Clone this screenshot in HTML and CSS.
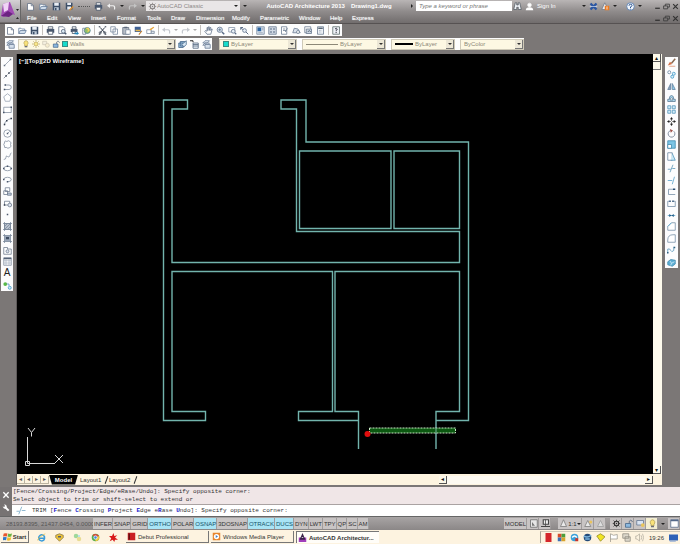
FILE: index.html
```
<!DOCTYPE html>
<html lang="en">

<head>
  <meta charset="UTF-8">
  <meta name="viewport" content="width=device-width, initial-scale=1.0">
  <title>AutoCAD Architecture 2013 - Drawing1.dwg</title>
  <link rel="stylesheet" href="styles.css">
</head>

<body>
  <!-- icon sheet -->
  <svg class="sheet" aria-hidden="true">
    <symbol id="new" viewBox="0 0 12 12"><path d="M2 2h5l3 3v6H2z" fill="#fff" stroke="#5d6b80"/><path d="M7 2v3h3" fill="none" stroke="#5d6b80"/></symbol>
    <symbol id="open" viewBox="0 0 12 12"><path d="M1 10V3h3l1 1h4v2" fill="#fff" stroke="#5d7695"/><path d="M1 10l2-4h8l-2 4z" fill="#cfdcea" stroke="#5d7695"/></symbol>
    <symbol id="save" viewBox="0 0 12 12"><path d="M1 1h10v10H1z" fill="#3d4f68"/><path d="M3 1h6v4H3z" fill="#e9eef5"/><path d="M3 7h6v4H3z" fill="#bfcbd9"/><path d="M4 8h2v3H4z" fill="#3d4f68"/></symbol>
    <symbol id="saveas" viewBox="0 0 12 12"><path d="M1 1h9v9H1z" fill="#3d4f68"/><path d="M3 1h5v3H3zM3 6h5v4H3z" fill="#e9eef5"/><path d="M6 11l5-5" stroke="#d88d2e" stroke-width="2"/></symbol>
    <symbol id="print" viewBox="0 0 12 12"><path d="M3 1h6v3H3z" fill="#fff" stroke="#3e4b5f"/><path d="M1 4h10v5H1z" fill="#4a5970"/><path d="M3 7h6v4H3z" fill="#fff" stroke="#3e4b5f"/></symbol>
    <symbol id="preview" viewBox="0 0 12 12"><path d="M1 1h6l2 2v7H1z" fill="#fff" stroke="#5d6b80"/><circle cx="7" cy="7" r="2.5" fill="#dceaf5" stroke="#4b5a70"/><path d="M9 9l2 2" stroke="#4b5a70" stroke-width="2"/></symbol>
    <symbol id="publish" viewBox="0 0 12 12"><path d="M3 1h5v3H3z" fill="#fff" stroke="#3e4b5f"/><path d="M1 4h9v4H1z" fill="#4a5970"/><path d="M3 7h4v3H3z" fill="#fff" stroke="#3e4b5f"/><path d="M6 9h3V7l3 3-3 2v-1H6z" fill="#2586b9"/></symbol>
    <symbol id="globe" viewBox="0 0 12 12"><path d="M1 3h4v8H1z" fill="#fff" stroke="#66788f"/><circle cx="7" cy="6" r="4" fill="#8fbf6a" stroke="#4d7a96"/><path d="M5 3l3 2-1 3 3-1V4L8 2z" fill="#f2d15c"/></symbol>
    <symbol id="cut" viewBox="0 0 12 12"><path d="M3 2l6 7M9 2L3 9M1 1h2M9 1h2M1 11h2M9 11h2" stroke="#333c4a" stroke-width="1.3"/><circle cx="3" cy="9" r="1.4" fill="none" stroke="#333c4a"/><circle cx="9" cy="9" r="1.4" fill="none" stroke="#333c4a"/></symbol>
    <symbol id="copy" viewBox="0 0 12 12"><path d="M1 1h6v7H1zM4 4h6v7H4z" fill="#fff" stroke="#74849a"/></symbol>
    <symbol id="paste" viewBox="0 0 12 12"><path d="M1 2h8v9H1z" fill="#b7bdc6" stroke="#5b677a"/><path d="M3 1h4v2H3z" fill="#5b677a"/><path d="M5 5h6v6H5z" fill="#fff" stroke="#74849a"/></symbol>
    <symbol id="match" viewBox="0 0 12 12"><path d="M1 1h8v7H1z" fill="#3d5f95"/><path d="M2 5h6v2H2z" fill="#e6b54a"/><path d="M6 11l4-5 1 1-4 5z" fill="#c07a2d"/></symbol>
    <symbol id="block" viewBox="0 0 12 12"><path d="M1 5h6v5H1z" fill="#fff" stroke="#7a879a"/><path d="M7 7h4v3H7z" fill="#dfe5ed" stroke="#7a879a"/><path d="M5 4l5-3 1 1-5 4z" fill="#e5a43a"/></symbol>
    <symbol id="undo" viewBox="0 0 12 12"><path d="M2 5h6q3 0 2 5" fill="none" stroke="currentColor" stroke-width="1.6"/><path d="M0 5l4-3v6z" fill="currentColor"/></symbol>
    <symbol id="redo" viewBox="0 0 12 12"><path d="M10 5H4q-3 0-2 5" fill="none" stroke="currentColor" stroke-width="1.6"/><path d="M12 5L8 2v6z" fill="currentColor"/></symbol>
    <symbol id="hand" viewBox="0 0 12 12"><path d="M4 11L1 7l1-1 2 1V2h1v4l1-5h1v5l1-4h1v4l1-2h1L9 11z" fill="#fff" stroke="#62718a"/></symbol>
    <symbol id="zoomin" viewBox="0 0 12 12"><circle cx="5" cy="5" r="3.5" fill="#dfeaf5" stroke="#596b86"/><path d="M8 8l3 3" stroke="#596b86" stroke-width="2"/><path d="M3 5h4M5 3v4" stroke="#596b86"/></symbol>
    <symbol id="zoomwin" viewBox="0 0 12 12"><path d="M1 2h8v6H1z" fill="none" stroke="#8391a5"/><circle cx="7" cy="7" r="2.5" fill="#e8f0f8" stroke="#596b86"/><path d="M9 9l2 2" stroke="#596b86" stroke-width="1.5"/></symbol>
    <symbol id="zoomprev" viewBox="0 0 12 12"><circle cx="6" cy="6" r="2.5" fill="#e8f0f8" stroke="#596b86"/><path d="M8 8l3 3M1 5V2h3M1 2l3 3" fill="none" stroke="#596b86" stroke-width="1.3"/></symbol>
    <symbol id="props" viewBox="0 0 12 12"><path d="M1 1h10v10H1z" fill="#dfe7f1" stroke="#73849b"/><path d="M2 2h5v5H2z" fill="#2b64a1"/><path d="M8 3h2M8 5h2M3 9h6" stroke="#8b98aa"/></symbol>
    <symbol id="dcenter" viewBox="0 0 12 12"><path d="M1 1h10v10H1z" fill="#d3dbe6" stroke="#66778e"/><path d="M3 3h2v2H3zM7 3h2v2H7zM3 7h2v2H3zM7 7h2v2H7z" fill="#66778e"/></symbol>
    <symbol id="palette" viewBox="0 0 12 12"><path d="M2 1h7v10H2z" fill="#fff" stroke="#66778e"/><path d="M4 4h3M4 6h4M7 8l3-5" stroke="#66778e"/></symbol>
    <symbol id="sheetset" viewBox="0 0 12 12"><path d="M1 9l2-6 5 1 3 5z" fill="#dae2ec" stroke="#66778e"/><circle cx="8" cy="8" r="2" fill="#fff" stroke="#66778e"/></symbol>
    <symbol id="markup" viewBox="0 0 12 12"><path d="M1 1h8v8H1z" fill="#fff" stroke="#66778e"/><path d="M3 4h7v6H3z" fill="#cbd5e2" stroke="#66778e"/><path d="M5 8l2-2 2 2" fill="none" stroke="#345"/></symbol>
    <symbol id="calc" viewBox="0 0 12 12"><path d="M2 1h8v10H2z" fill="#eef2f7" stroke="#66778e"/><path d="M3 3h6" stroke="#345" stroke-width="1.5"/><path d="M4 6h4M4 8h4" stroke="#8b98aa" stroke-dasharray="1 1"/></symbol>
    <symbol id="help" viewBox="0 0 12 12"><path d="M1 1h9v10H1z" fill="#eef2f7" stroke="#566"/><path d="M4 4q2-2 3 0 0 1-1.5 2v1M5.500 8v1.500" fill="none" stroke="#223" stroke-width="1.200"/></symbol>
    <symbol id="layers" viewBox="0 0 12 12"><path d="M1 4l3-3h6L7 4zM1 7l3-3h6L7 7z" fill="#e8eff7" stroke="#657a94"/><path d="M4 6h7v5H4z" fill="#d5dfeb" stroke="#657a94"/></symbol>
    <symbol id="current" viewBox="0 0 12 12"><path d="M1 10V4h6v6zM3 8V2h6v6z" fill="#9dc1e2" stroke="#3e6084"/><path d="M5 6l6-5v5L8 9z" fill="#d9e9f7" stroke="#3e6084"/></symbol>
    <symbol id="layerprev" viewBox="0 0 12 12"><path d="M4 4h7v7H4z" fill="#e8eff7" stroke="#4d6179"/><path d="M4 6h7M4 8h7" stroke="#4d6179"/><path d="M0 1h4v2" fill="none" stroke="#222" stroke-width="1.300"/></symbol>
    <symbol id="bulb" viewBox="0 0 12 12"><path d="M6 1a3.500 3.500 0 0 0-2 6v2h4V7a3.500 3.500 0 0 0-2-6z" fill="#f9e27a" stroke="#b19d54"/><path d="M4 10h4" stroke="#6c6f78" stroke-width="2"/></symbol>
    <symbol id="sun" viewBox="0 0 12 12"><circle cx="6" cy="6" r="3" fill="#fbe88c" stroke="#b19d54"/><path d="M6 0v2M6 10v2M0 6h2M10 6h2M2 2l1 1M9 9l1 1M10 2L9 3M3 9l-1 1" stroke="#b19d54"/></symbol>
    <symbol id="freeze" viewBox="0 0 12 12"><path d="M1 2h6v5H1z" fill="#f3efdf" stroke="#c8c3b2"/><circle cx="8" cy="8" r="3" fill="#f6edd0" stroke="#c8c3b2"/></symbol>
    <symbol id="unlock" viewBox="0 0 12 12"><path d="M7 6V3q2-3 4 0v1" fill="none" stroke="#4b5e78"/><path d="M2 6h7v5H2z" fill="#8cb8de" stroke="#3f6187"/></symbol>
    <symbol id="binoc" viewBox="0 0 12 12"><path d="M3 1h2v3h2V1h2l2 9H7V7H5v3H1z" fill="#eef1f5" stroke="#515963"/></symbol>
    <symbol id="user" viewBox="0 0 12 12"><circle cx="6" cy="4" r="2.500" fill="#fff" stroke="#eee"/><path d="M1 11q0-4 5-4t5 4z" fill="#fff"/></symbol>
    <symbol id="exchange" viewBox="0 0 12 12"><path d="M2 2l8 8M10 2l-8 8" stroke="#2a56a3" stroke-width="3"/><path d="M1 6h10" stroke="#c7d7f0"/></symbol>
    <symbol id="a360" viewBox="0 0 12 12"><path d="M1 10l4-9 5 9z" fill="#e9edf3" stroke="#6b7787"/><path d="M5 5h6v6H5z" fill="#ea7a22"/><path d="M8 6v4" stroke="#fff"/></symbol>
    <symbol id="query" viewBox="0 0 12 12"><circle cx="6" cy="6" r="5" fill="#f2f6fb" stroke="#4975ad"/><path d="M4 5q0-2 2-2t2 1.500Q8 6 6 6.500V8M6 9v1" fill="none" stroke="#244e8c" stroke-width="1.300"/></symbol>
    <symbol id="gear" viewBox="0 0 12 12"><circle cx="6" cy="6" r="3" fill="none" stroke="currentColor" stroke-width="1.500"/><circle cx="6" cy="6" r="1" fill="currentColor"/><path d="M6 1v2M6 9v2M1 6h2M9 6h2M2 2l2 2M8 8l2 2M10 2L8 4M4 8l-2 2" stroke="currentColor"/></symbol>
    <symbol id="min" viewBox="0 0 12 12"><path d="M2 9h8" stroke="#2d2d2d" stroke-width="2"/></symbol>
    <symbol id="restore" viewBox="0 0 12 12"><path d="M4 5V2h7v5H8M1 5h7v5H1z" fill="none" stroke="#3b3b3b" stroke-width="1.400"/></symbol>
    <symbol id="close" viewBox="0 0 12 12"><path d="M2 2l8 8M10 2l-8 8" stroke="currentColor" stroke-width="2"/></symbol>

    <!-- draw tools -->
    <symbol id="line" viewBox="0 0 12 12"><path d="M2 10l8-8" stroke="#8b94a3"/><path d="M1 9h2v2H1zM9 1h2v2H9z" fill="#657184"/></symbol>
    <symbol id="xline" viewBox="0 0 12 12"><path d="M1 11L11 1" stroke="#6d7888" stroke-dasharray="3 1"/><path d="M3 7h2v2H3zM7 3h2v2H7z" fill="#343d4c"/></symbol>
    <symbol id="pline" viewBox="0 0 12 12"><path d="M2 10h6q3 0 3-3T8 4H3" fill="none" stroke="#788496"/><path d="M1 9h2v2H1zM2 3h2v2H2z" fill="#49556a"/></symbol>
    <symbol id="polygon" viewBox="0 0 12 12"><path d="M6 1l5 4-2 6H3L1 5z" fill="#fff" stroke="#929cad"/></symbol>
    <symbol id="rect" viewBox="0 0 12 12"><path d="M1 3h10v7H1z" fill="#fff" stroke="#7d899b"/><path d="M0 9h2v2H0zM10 2h2v2h-2z" fill="#49556a"/></symbol>
    <symbol id="arc" viewBox="0 0 12 12"><path d="M2 11q0-7 9-9" fill="none" stroke="#7d899b"/><path d="M1 9h2v2H1zM4 4h2v2H4zM10 1h2v2h-2z" fill="#343d4c"/></symbol>
    <symbol id="circle" viewBox="0 0 12 12"><circle cx="6" cy="6" r="5" fill="#fff" stroke="#7d899b"/><path d="M6 6l3-3" stroke="#7d899b"/><path d="M5 5h2v2H5z" fill="#49556a"/></symbol>
    <symbol id="cloud" viewBox="0 0 12 12"><path d="M2 4q0-4 3-2 3-2 4 0 3 1 1 4 2 3-1 4-3 2-4 0-4 1-3-2-2-2 0-4z" fill="#fff" stroke="#7c879a"/></symbol>
    <symbol id="spline" viewBox="0 0 12 12"><path d="M1 10q3 0 3-3t2-1 3-1 2-4" fill="none" stroke="#7d899b"/></symbol>
    <symbol id="ellipse" viewBox="0 0 12 12"><ellipse cx="6" cy="6" rx="5" ry="3" fill="#fff" stroke="#7d899b"/><path d="M0 5h2v2H0zM10 5h2v2h-2zM5 2h2v2H5z" fill="#49556a"/></symbol>
    <symbol id="earc" viewBox="0 0 12 12"><path d="M1 6q0-3 5-3t5 3-5 3" fill="none" stroke="#7d899b"/><path d="M0 5h2v2H0zM5 8h2v2H5z" fill="#49556a"/></symbol>
    <symbol id="insert" viewBox="0 0 12 12"><path d="M3 1h6v5H3zM1 5h5v5H1z" fill="#fff" stroke="#6a768a"/><path d="M6 8h5v3H6z" fill="#bcc9db" stroke="#6a768a"/></symbol>
    <symbol id="mkblock" viewBox="0 0 12 12"><path d="M2 3h7v5H2z" fill="#fff" stroke="#6a768a"/><circle cx="9" cy="8" r="2.500" fill="#dde4ee" stroke="#6a768a"/><path d="M1 7h2v2H1z" fill="#343d4c"/></symbol>
    <symbol id="point" viewBox="0 0 12 12"><path d="M5 5h2v2H5z" fill="#48546a"/></symbol>
    <symbol id="hatch" viewBox="0 0 12 12"><path d="M2 2h8v8H2z" fill="#b9c1ce" stroke="#788598"/><path d="M0 2h12M0 10h12M2 0v12M10 0v12M2 10l8-8M2 6l4-4M6 10l4-4" stroke="#788598"/></symbol>
    <symbol id="gradient" viewBox="0 0 12 12"><path d="M2 2h8v8H2z" fill="#9aa6b8"/><path d="M0 2h12M0 10h12M2 0v12M10 0v12" stroke="#788598"/><path d="M4 4h4v3H4z" fill="#3f4c61"/></symbol>
    <symbol id="region" viewBox="0 0 12 12"><path d="M1 2h5v2h5v7H1z" fill="#fff" stroke="#6a768a"/><circle cx="6" cy="7" r="2" fill="#dde4ee" stroke="#6a768a"/></symbol>
    <symbol id="table" viewBox="0 0 12 12"><path d="M1 1h10v10H1z" fill="#fff" stroke="#7d899b"/><path d="M1 2h10" stroke="#566377" stroke-width="2"/><path d="M1 5h10M1 8h10M4 3v8M8 3v8" stroke="#aab3c1"/></symbol>
    <symbol id="addsel" viewBox="0 0 12 12"><circle cx="3" cy="4" r="2.500" fill="#58b947"/><path d="M5 4h3v3" fill="none" stroke="#4d8fbd"/><circle cx="9" cy="9" r="2" fill="#cdeaf8" stroke="#3e96c6"/></symbol>

    <!-- modify tools -->
    <symbol id="erase" viewBox="0 0 12 12"><path d="M11 1L6 7" stroke="#8a6a52" stroke-width="2"/><path d="M1 10l3-5 3 3z" fill="#d26f45"/><path d="M3 11h8" stroke="#dc8a68"/></symbol>
    <symbol id="dup" viewBox="0 0 12 12"><circle cx="3" cy="3" r="2" fill="#fff" stroke="#64809c"/><circle cx="9" cy="5" r="2" fill="#d9eff9" stroke="#3e96c6"/><circle cx="7" cy="9" r="2" fill="#d9eff9" stroke="#3e96c6"/></symbol>
    <symbol id="mirror" viewBox="0 0 12 12"><path d="M5 2v8H1z" fill="#8ba0b6" stroke="#5e7d9c"/><path d="M7 2v8h4z" fill="#8fcdec" stroke="#5e7d9c"/></symbol>
    <symbol id="offset" viewBox="0 0 12 12"><path d="M1 10V7h2q0-5 3-5t3 5h2v3z" fill="#add9ee" stroke="#55758f"/><path d="M4 8q0-3 2-3t2 3z" fill="#fff" stroke="#55758f"/></symbol>
    <symbol id="array" viewBox="0 0 12 12"><path d="M1 1h4v4H1zM7 1h4v4H7zM1 7h4v4H1zM7 7h4v4H7z" fill="#d3edf9" stroke="#4d90b7"/></symbol>
    <symbol id="move" viewBox="0 0 12 12"><path d="M6 2v8M2 6h8" stroke="#333" stroke-dasharray="3 2"/><path d="M6 0l2 3H4zM6 12l2-3H4zM0 6l3-2v4zM12 6L9 4v4z" fill="#222"/></symbol>
    <symbol id="rotate" viewBox="0 0 12 12"><path d="M5 2a4.500 4.500 0 1 0 4 1" fill="none" stroke="#788596" stroke-width="1.200"/><path d="M4 0l4 2-3 3z" fill="#a05048"/></symbol>
    <symbol id="scale" viewBox="0 0 12 12"><path d="M1 1h10v10H1z" fill="#7cc5e5" stroke="#3b87ab"/><path d="M1 6h5v5H1z" fill="#fff" stroke="#3b87ab"/></symbol>
    <symbol id="stretch" viewBox="0 0 12 12"><path d="M1 1h6v10H1z" fill="#fff" stroke="#64809c"/><path d="M7 2l4 9H5" fill="#c9e7f5" stroke="#4d90b7"/></symbol>
    <symbol id="trim" viewBox="0 0 12 12"><path d="M1 7h4M7 6h4M4 11L8 1" stroke="#4f8fb2"/></symbol>
    <symbol id="extend" viewBox="0 0 12 12"><path d="M1 6h6M7 11l3-10" stroke="#4f9cc6"/></symbol>
    <symbol id="break1" viewBox="0 0 12 12"><path d="M8 3H2v7h9" fill="none" stroke="#6f89a2"/><path d="M8 2h3v2H8z" fill="#274b70"/></symbol>
    <symbol id="break2" viewBox="0 0 12 12"><path d="M3 3H1v7h10V3H9" fill="none" stroke="#6f89a2"/><path d="M3 2h2v2H3zM7 2h2v2H7z" fill="#274b70"/></symbol>
    <symbol id="join" viewBox="0 0 12 12"><path d="M1 6h10" stroke="#4f9cc6"/><path d="M3 4l3 2-3 2zM9 4L6 6l3 2z" fill="#215d88"/></symbol>
    <symbol id="chamfer" viewBox="0 0 12 12"><path d="M1 11V6l5-5h5v10z" fill="#fff" stroke="#6f89a2"/><path d="M1 6l5-5" stroke="#4fa9d4"/></symbol>
    <symbol id="fillet" viewBox="0 0 12 12"><path d="M1 11V8q0-7 7-7h3v10z" fill="#fff" stroke="#6f89a2"/></symbol>
    <symbol id="blend" viewBox="0 0 12 12"><path d="M1 9V4q3-1 4 2t4 0V1" fill="none" stroke="#4d90b7"/><path d="M0 8h2v2H0zM9 1h2v2H9z" fill="#315f80"/></symbol>
    <symbol id="explode" viewBox="0 0 12 12"><path d="M1 5l4-3 6 1v5l-4 3-6-2z" fill="#5fb0d6" stroke="#3c88ae"/><path d="M4 4l2 3 4-2M6 7l-1 3" fill="none" stroke="#d8f0fa"/></symbol>
  </svg>

  <div class="app">
    <header class="titlebar">
      <button class="logo" aria-label="Application menu">
        <svg viewBox="0 0 20 22"><path d="M1 16L3 4l7-2 5 13-6-2-5 4z" fill="#a14cb4"/><path d="M3 4l6-2-1 8-4 2z" fill="#f0d3f6"/><path d="M1 16l7-5 5 3-4 3z" fill="#6c2382"/><path d="M16 9h3l-1.500 2zM16 19h3l-1.500 -2z" fill="#222"/></svg>
      </button>
      <div class="bars">
        <div class="quick">
          <div class="qat">
            <button aria-label="New"><svg><use href="#new"/></svg></button>
            <button aria-label="Open"><svg><use href="#open"/></svg></button>
            <button aria-label="Save"><svg><use href="#save"/></svg></button>
            <button aria-label="Save as"><svg><use href="#saveas"/></svg></button>
            <i class="dots"></i>
            <button aria-label="Plot"><svg><use href="#print"/></svg></button>
            <button aria-label="Undo"><svg><use href="#undo"/></svg></button>
            <i class="caret"></i>
            <button aria-label="Redo"><svg class="dim"><use href="#redo"/></svg></button>
            <i class="caret"></i>
          </div>
          <div class="workspace-pick">
            <svg><use href="#gear"/></svg>
            <select aria-label="Workspace"><option>AutoCAD Classic</option></select>
            <i class="caret"></i>
          </div>
          <i class="caret"></i>
          <h1><span>AutoCAD Architecture 2013</span> <span>Drawing1.dwg</span></h1>
          <i class="caret side"></i>
          <input class="search" type="text" placeholder="Type a keyword or phrase" aria-label="Search help">
          <div class="info">
            <button aria-label="Search"><svg><use href="#binoc"/></svg></button>
            <button class="signin"><svg><use href="#user"/></svg>Sign In</button>
            <i class="caret"></i>
            <button aria-label="Exchange"><svg><use href="#exchange"/></svg></button>
            <button aria-label="Online"><svg><use href="#a360"/></svg></button>
            <i class="caret"></i>
            <button class="about" aria-label="Help"><svg><use href="#query"/></svg></button>
            <i class="caret"></i>
          </div>
          <div class="win">
            <button aria-label="Minimize"><svg><use href="#min"/></svg></button>
            <button aria-label="Restore"><svg><use href="#restore"/></svg></button>
            <button aria-label="Close"><svg><use href="#close"/></svg></button>
          </div>
        </div>
        <div class="menubar">
          <nav class="menu">
            <a href="#">File</a><a href="#">Edit</a><a href="#">View</a><a href="#">Insert</a><a href="#">Format</a><a href="#">Tools</a><a href="#">Draw</a><a href="#">Dimension</a><a href="#">Modify</a><a href="#">Parametric</a><a href="#">Window</a><a href="#">Help</a><a href="#">Express</a>
          </nav>
          <div class="win">
            <button aria-label="Minimize drawing"><svg><use href="#min"/></svg></button>
            <button aria-label="Restore drawing"><svg><use href="#restore"/></svg></button>
            <button aria-label="Close drawing"><svg><use href="#close"/></svg></button>
          </div>
        </div>
      </div>
    </header>

    <div class="toolbars">
      <div class="strip standard">
        <button aria-label="New"><svg><use href="#new"/></svg></button>
        <button aria-label="Open"><svg><use href="#open"/></svg></button>
        <button aria-label="Save"><svg><use href="#save"/></svg></button>
        <hr>
        <button aria-label="Plot"><svg><use href="#print"/></svg></button>
        <button aria-label="Preview"><svg><use href="#preview"/></svg></button>
        <button aria-label="Publish"><svg><use href="#publish"/></svg></button>
        <button aria-label="3D DWF"><svg><use href="#globe"/></svg></button>
        <hr>
        <button aria-label="Cut"><svg><use href="#cut"/></svg></button>
        <button aria-label="Copy"><svg><use href="#copy"/></svg></button>
        <button aria-label="Paste"><svg><use href="#paste"/></svg></button>
        <button aria-label="Match properties"><svg><use href="#match"/></svg></button>
        <button aria-label="Block editor"><svg><use href="#block"/></svg></button>
        <hr>
        <button aria-label="Undo"><svg class="off"><use href="#undo"/></svg></button>
        <i class="caret pale"></i>
        <button aria-label="Redo"><svg class="off"><use href="#redo"/></svg></button>
        <i class="caret pale"></i>
        <hr>
        <button aria-label="Pan"><svg><use href="#hand"/></svg></button>
        <button aria-label="Zoom realtime"><svg><use href="#zoomin"/></svg></button>
        <button aria-label="Zoom window"><svg><use href="#zoomwin"/></svg></button>
        <button aria-label="Zoom previous"><svg><use href="#zoomprev"/></svg></button>
        <hr>
        <button aria-label="Properties"><svg><use href="#props"/></svg></button>
        <button aria-label="Design center"><svg><use href="#dcenter"/></svg></button>
        <button aria-label="Tool palettes"><svg><use href="#palette"/></svg></button>
        <button aria-label="Sheet sets"><svg><use href="#sheetset"/></svg></button>
        <button aria-label="Markup"><svg><use href="#markup"/></svg></button>
        <button aria-label="Calculator"><svg><use href="#calc"/></svg></button>
        <hr>
        <button aria-label="Help"><svg><use href="#help"/></svg></button>
      </div>

      <div class="row">
        <div class="strip layer-strip">
          <button aria-label="Layer manager"><svg><use href="#layers"/></svg></button>
          <div class="combo layer">
            <svg><use href="#bulb"/></svg><svg><use href="#sun"/></svg><svg><use href="#freeze"/></svg><svg><use href="#unlock"/></svg><i class="swatch"></i>
            <select aria-label="Layer"><option>Walls</option></select><i class="drop"></i>
          </div>
          <button aria-label="Make current"><svg><use href="#current"/></svg></button>
          <button aria-label="Layer previous"><svg><use href="#layerprev"/></svg></button>
          <button aria-label="Layer states"><svg><use href="#layers"/></svg></button>
        </div>
        <div class="strip prop-strip">
          <div class="combo color"><i class="swatch"></i><select aria-label="Color"><option>ByLayer</option></select><i class="drop"></i></div>
          <div class="combo ltype"><i class="thin"></i><select aria-label="Linetype"><option>ByLayer</option></select><i class="drop"></i></div>
          <div class="combo lweight"><i class="thick"></i><select aria-label="Lineweight"><option>ByLayer</option></select><i class="drop"></i></div>
          <div class="combo plot"><select aria-label="Plot style"><option>ByColor</option></select><i class="drop"></i></div>
        </div>
      </div>
    </div>

    <main class="workspace">
      <aside class="dock">
        <div class="tools draw">
          <button aria-label="Line"><svg><use href="#line"/></svg></button>
          <button aria-label="Construction line"><svg><use href="#xline"/></svg></button>
          <button aria-label="Polyline"><svg><use href="#pline"/></svg></button>
          <button aria-label="Polygon"><svg><use href="#polygon"/></svg></button>
          <button aria-label="Rectangle"><svg><use href="#rect"/></svg></button>
          <button aria-label="Arc"><svg><use href="#arc"/></svg></button>
          <button aria-label="Circle"><svg><use href="#circle"/></svg></button>
          <button aria-label="Revision cloud"><svg><use href="#cloud"/></svg></button>
          <button aria-label="Spline"><svg><use href="#spline"/></svg></button>
          <button aria-label="Ellipse"><svg><use href="#ellipse"/></svg></button>
          <button aria-label="Ellipse arc"><svg><use href="#earc"/></svg></button>
          <button aria-label="Insert block"><svg><use href="#insert"/></svg></button>
          <button aria-label="Make block"><svg><use href="#mkblock"/></svg></button>
          <button aria-label="Point"><svg><use href="#point"/></svg></button>
          <button aria-label="Hatch"><svg><use href="#hatch"/></svg></button>
          <button aria-label="Gradient"><svg><use href="#gradient"/></svg></button>
          <button aria-label="Region"><svg><use href="#region"/></svg></button>
          <button aria-label="Table"><svg><use href="#table"/></svg></button>
          <button class="mtext" aria-label="Multiline text">A</button>
          <button aria-label="Add selected"><svg><use href="#addsel"/></svg></button>
        </div>
      </aside>

      <section class="drawing">
        <div class="view">
          <div class="canvas">
            <p class="view-label">[−][Top][2D Wireframe]</p>
            <svg class="plan" viewBox="17 54 636 420" preserveAspectRatio="xMidYMid meet">
              <g class="walls">
                <path d="M163.500 100H187.500V109H172V262.500H459.500V231.500H296.500V109H281V100H306V142H468.500V420.500H436"/>
                <path d="M436 449V411.500H459.500V271.500H335V411.500H358.500V449"/>
                <path d="M358.500 420.500H298.500V411.500H332.500V271.500H172V411.500H205.500V420.500H163.500V99.500"/>
                <path d="M299.500 151H391V228.500H299.500zM394 151H459.500V228.500H394z"/>
              </g>
              <rect class="crossing" x="369.500" y="428" width="86" height="5"/>
              <path d="M436 427V434" stroke="#78b5a0"/>
              <circle cx="367.500" cy="434" r="3" fill="#e00d0d"/>
            </svg>
            <svg class="ucs" viewBox="0 0 40 44" aria-hidden="true"><path d="M3.500 9V35.500H31M1.500 33.500h4v4h-4zM4 0l3.500 4.500L11 0M7.500 4.500V8.500M31 27l8 8M39 27l-8 8" fill="none" stroke="#d8d8d8"/></svg>
          </div>
          <div class="vscroll">
            <button aria-label="Scroll up">▴</button>
            <i class="thumb"></i>
            <button class="end" aria-label="Scroll down">▾</button>
          </div>
        </div>
        <div class="tabs">
          <div class="tab-nav">
            <button aria-label="First">◂</button><button aria-label="Previous">◂</button><button aria-label="Next">▸</button><button aria-label="Last">▸</button>
          </div>
          <a class="tab active" href="#">Model</a>
          <a class="tab" href="#">Layout1</a>
          <a class="tab" href="#">Layout2</a>
          <div class="hscroll">
            <button aria-label="Scroll left">◂</button>
            <i class="track"></i>
            <button aria-label="Scroll right">▸</button>
          </div>
        </div>
      </section>

      <aside class="dock right">
        <div class="tools modify">
          <button aria-label="Erase"><svg><use href="#erase"/></svg></button>
          <button aria-label="Copy objects"><svg><use href="#dup"/></svg></button>
          <button aria-label="Mirror"><svg><use href="#mirror"/></svg></button>
          <button aria-label="Offset"><svg><use href="#offset"/></svg></button>
          <button aria-label="Array"><svg><use href="#array"/></svg></button>
          <button aria-label="Move"><svg><use href="#move"/></svg></button>
          <button aria-label="Rotate"><svg><use href="#rotate"/></svg></button>
          <button aria-label="Scale"><svg><use href="#scale"/></svg></button>
          <button aria-label="Stretch"><svg><use href="#stretch"/></svg></button>
          <button aria-label="Trim"><svg><use href="#trim"/></svg></button>
          <button aria-label="Extend"><svg><use href="#extend"/></svg></button>
          <button aria-label="Break at point"><svg><use href="#break1"/></svg></button>
          <button aria-label="Break"><svg><use href="#break2"/></svg></button>
          <button aria-label="Join"><svg><use href="#join"/></svg></button>
          <button aria-label="Chamfer"><svg><use href="#chamfer"/></svg></button>
          <button aria-label="Fillet"><svg><use href="#fillet"/></svg></button>
          <button aria-label="Blend curves"><svg><use href="#blend"/></svg></button>
          <button aria-label="Explode"><svg><use href="#explode"/></svg></button>
        </div>
      </aside>
    </main>

    <section class="command">
      <div class="grip">
        <button aria-label="Close command line"><svg><use href="#close"/></svg></button>
        <button aria-label="Customize"><svg viewBox="0 0 12 12"><path d="M4 4l6 6" stroke="#fff" stroke-width="3"/><path d="M1 3l2 2 2-2-2-2q3-1 4 2t-2 4-4-4z" fill="#fff"/></svg></button>
      </div>
      <div class="console">
        <div class="history">
          <p>[Fence/Crossing/Project/Edge/eRase/Undo]: Specify opposite corner:</p>
          <p>Select object to trim or shift-select to extend or</p>
        </div>
        <div class="prompt">
          <svg viewBox="0 0 14 12"><path d="M1 7h4M8 6h5M4 11L8 1" stroke="#6ba2c2"/></svg>
          <p>TRIM [<b>F</b>ence <b>C</b>rossing <b>P</b>roject <b>E</b>dge e<b>R</b>ase <b>U</b>ndo]: Specify opposite corner:</p>
        </div>
      </div>
    </section>

    <div class="status">
      <span class="coords">28193.8395, 21437.0454, 0.0000</span>
      <div class="modes">
        <button>INFER</button><button>SNAP</button><button>GRID</button><button class="on">ORTHO</button><button>POLAR</button><button class="on">OSNAP</button><button>3DOSNAP</button><button class="on">OTRACK</button><button class="on">DUCS</button><button>DYN</button><button>LWT</button><button>TPY</button><button>QP</button><button>SC</button><button>AM</button>
      </div>
      <div class="status-right">
        <button class="space">MODEL</button>
        <button aria-label="Quick view layouts"><svg viewBox="0 0 12 12"><path d="M2 1h9v10H2z" fill="#e6e6e6" stroke="#666"/><path d="M4 4l4 5H4z" fill="#777"/></svg></button>
        <button aria-label="Quick view drawings"><svg viewBox="0 0 12 12"><path d="M3 1h7v6H3zM0 10h12" fill="#eee" stroke="#444" stroke-width="1.500"/><path d="M6 1v9" stroke="#444"/></svg></button>
        <button class="scale"><svg viewBox="0 0 12 12"><path d="M6 1l4 9H2z" fill="#e9e9e9" stroke="#777"/></svg>1:1<i class="caret"></i></button>
        <button aria-label="Annotation visibility"><svg viewBox="0 0 12 12"><path d="M5 2l4 8H1z" fill="#e9e9e9" stroke="#777"/><circle cx="9" cy="4" r="2" fill="#eac35b"/></svg></button>
        <button aria-label="Auto scale"><svg viewBox="0 0 12 12"><path d="M6 2l4 8H2z" fill="#ddd" stroke="#999"/></svg></button>
        <button class="gap" aria-label="Workspace switching"><svg><use href="#gear"/></svg></button>
        <button aria-label="Lock toolbars"><svg><use href="#unlock"/></svg></button>
        <button aria-label="Hardware"><svg viewBox="0 0 12 12"><path d="M1 2h9v6H1z" fill="#d9e4f2" stroke="#5f7390"/><circle cx="9" cy="8" r="2.500" fill="#e9c55b"/></svg></button>
        <button class="lit" aria-label="Isolate objects"><svg><use href="#bulb"/></svg></button>
        <i class="caret"></i>
        <button aria-label="Clean screen"><svg viewBox="0 0 12 12"><path d="M1 1h10v10H1z" fill="#fff" stroke="#54698a"/><path d="M1 2h10" stroke="#54698a" stroke-width="2"/></svg></button>
      </div>
    </div>

    <footer class="taskbar">
      <button class="start"><svg viewBox="0 0 12 12"><path d="M1 2q3-1 5 0L5 6Q3 5 0 6z" fill="#e8562c"/><path d="M7 2q2 1 5 0l-1 4q-3 1-5 0z" fill="#6cb33f"/><path d="M0 7q3-1 5 0l-1 4q-2-1-4 0z" fill="#3279c8"/><path d="M6 7q2 1 5 0l-1 4q-3 1-5 0z" fill="#f2bd2c"/></svg>Start</button>
      <div class="launch">
        <a href="#" aria-label="Internet Explorer"><svg viewBox="0 0 12 12"><path d="M10 8a4 4 0 1 1 0-3v2H3" fill="none" stroke="#3a9bdb" stroke-width="2"/><path d="M1 10Q0 7 11 1" fill="none" stroke="#e9c23e"/></svg></a>
        <a href="#" aria-label="Messenger"><svg viewBox="0 0 12 12"><path d="M1 3l5-2 5 2v3l-5 5-5-5z" fill="#eac23a" stroke="#887441"/><path d="M4 4h4v2H4z" fill="#555e74"/></svg></a>
        <a href="#" aria-label="Contacts"><svg viewBox="0 0 12 12"><circle cx="4" cy="4" r="3" fill="#9fd89a"/><circle cx="8" cy="8" r="3" fill="#e8dc94"/><circle cx="8" cy="4" r="1.500" fill="#b4dff0"/></svg></a>
        <a href="#" aria-label="Chrome"><svg viewBox="0 0 12 12"><circle cx="6" cy="6" r="5" fill="#52ad51"/><path d="M6 6L2 3q4-4 9 1z" fill="#dd4436"/><path d="M6 6l5-2q1 6-5 7z" fill="#f4c83b"/><circle cx="6" cy="6" r="2.200" fill="#4386df" stroke="#fff"/></svg></a>
        <a href="#" aria-label="Xfrog"><svg viewBox="0 0 12 12"><path d="M6 0l1 4 4-1-3 3 4 3-4 0-1 3-2-3-4 2 2-4-3-3 4 0z" fill="#d81a1a"/></svg></a>
      </div>
      <div class="tasks">
        <button><svg viewBox="0 0 12 12"><path d="M1 1h10v10H1z" fill="#c91f24"/><path d="M3 2v8" stroke="#651014" stroke-width="2"/></svg>Debut Professional</button>
        <button><svg viewBox="0 0 12 12"><path d="M1 1h10v10H1z" fill="#e6842d"/><circle cx="6" cy="6" r="3.500" fill="#fff"/><path d="M5 4l3 2-3 2z" fill="#3f7cc4"/></svg>Windows Media Player</button>
        <button class="current"><svg viewBox="0 0 12 12"><path d="M1 6h10v6H1z" fill="#a13fbb"/><path d="M2 9l4-9 4 9z" fill="#3c244a"/><path d="M5 6h2" stroke="#fff"/></svg>AutoCAD Architectur...</button>
      </div>
      <div class="tray">
        <svg viewBox="0 0 12 12"><path d="M2 0h8v12H2z" fill="#d4262b"/></svg>
        <svg viewBox="0 0 12 12"><path d="M1 1h5v5H1z" fill="#d84c2b"/><path d="M6 1h5v5H6z" fill="#4c9e3c"/><path d="M1 6h5v5H1z" fill="#3c6fb9"/><path d="M6 6h5v5H6z" fill="#d8a32b"/></svg>
        <svg viewBox="0 0 12 12"><circle cx="6" cy="6" r="5" fill="#3aa0d8"/><path d="M3 6q3-4 6 0" stroke="#fff" stroke-width="2" fill="none"/><path d="M7 7h4v4H7z" fill="#c9342b"/></svg>
        <svg viewBox="0 0 12 12"><circle cx="6" cy="6" r="5" fill="#234a78"/><path d="M1 4q5 3 10-1M3 8h6" stroke="#7bb5df" stroke-width="2" fill="none"/></svg>
        <svg viewBox="0 0 12 12"><path d="M1 4l5-3 6 4-6 6z" fill="#f1e522" stroke="#8c8428"/></svg>
        <svg viewBox="0 0 12 12"><path d="M2 12V1l4 2 5-1v6H2" fill="#fff" stroke="#9a968c"/></svg>
        <svg viewBox="0 0 12 12"><path d="M1 1h8v6H1zM4 5h7v6H4z" fill="#ddd8cc" stroke="#8d897f"/></svg>
        <svg viewBox="0 0 12 12"><path d="M1 4h2l3-3v10L3 8H1zM8 3q2 3 0 6M10 1q3 5 0 10" fill="none" stroke="#b1ac9f"/></svg>
        <time>19:26</time>
        <svg viewBox="0 0 12 12"><path d="M0 2h12v8H0z" fill="#2e62b8"/><path d="M1 11h8" stroke="#7798cd"/></svg>
      </div>
    </footer>
  </div>
</body>

</html>
```
FILE: styles.css
```
* {
  box-sizing: border-box;
}
body {
  margin: 0;
  font-family: "Liberation Sans", Arial, sans-serif;
  font-size: 6px;
  line-height: 8px;
  color: #333;
  background-color: #7b7776;
}
.sheet {
  position: absolute;
  width: 0;
  height: 0;
}
.app {
  min-height: 100vh;
  display: flex;
  flex-direction: column;
}
button, select, input {
  font: inherit;
  color: inherit;
  margin: 0;
  padding: 0;
  border: none;
  border-radius: 0;
  background: none;
}
select {
  appearance: none;
  flex: 1;
  min-width: 0;
}
button {
  display: flex;
  align-items: center;
  justify-content: center;
  flex: none;
}
button svg, .combo svg, .workspace-pick svg, .launch svg, .tray svg {
  width: 9px;
  height: 9px;
  flex: none;
  display: block;
}
a {
  color: inherit;
  text-decoration: none;
}
p {
  margin: 0;
}
.caret {
  flex: none;
  border: 2px solid transparent;
  border-top-color: #222;
  border-bottom: none;
}
.caret.side {
  border: 2px solid transparent;
  border-left-color: #222;
  border-right: none;
}
.caret.pale {
  border-top-color: #aaa;
}

/* title bar */
.titlebar {
  display: flex;
  height: 24px;
  background: linear-gradient(#b9b5b5, #8f8b8b 50%, #716d6d);
  border-bottom: 1px solid #565252;
}
.logo {
  width: 21px;
  height: 22px;
  background: linear-gradient(#d5d1d5, #8e8a8e);
  border-right: 1px solid #666;
}
.logo svg {
  width: 20px;
  height: 22px;
}
.bars {
  flex: 1;
  min-width: 0;
}
.quick {
  display: flex;
  align-items: center;
  height: 12px;
}
.qat {
  display: flex;
  align-items: center;
  gap: 4px;
  width: 125px;
  padding-left: 5px;
}
.qat svg {
  color: #f0f0f0;
}
.qat .dim {
  color: #c4c4c4;
}
.dots {
  width: 12px;
  border-top: 1px dotted #555;
}
.workspace-pick {
  display: flex;
  align-items: center;
  width: 94px;
  height: 10px;
  padding: 0 2px;
  margin-right: 3px;
  color: #8a8686;
  background: #e9e6e7;
}
.quick h1 {
  flex: 1;
  margin: 0;
  font-size: 6px;
  color: #fff;
  white-space: nowrap;
  display: flex;
  justify-content: center;
  gap: 6px;
}
.search {
  width: 96px;
  height: 10px;
  margin: 0 1px 0 3px;
  padding: 0 3px;
  font-style: italic;
  background: #fff;
}
.search::placeholder {
  color: #777;
}
.info {
  display: flex;
  align-items: center;
  width: 140px;
  gap: 3px;
}
.signin {
  color: #fff;
  width: 54px;
  justify-content: flex-start;
  gap: 3px;
}
.about {
  margin-left: 6px;
}
.win {
  display: flex;
  width: 27px;
  color: #333;
}
.win button {
  width: 9px;
}
.win svg {
  width: 7px;
  height: 7px;
}
.menubar {
  display: flex;
  align-items: center;
  justify-content: space-between;
  height: 12px;
}
.menu {
  display: grid;
  grid-template-columns: 20px 21px 23px 26px 30px 24px 25px 36px 28px 39px 31px 22px 24px;
  padding-left: 6px;
  color: #fff;
  text-shadow: 0 0 1px #ddd;
}

/* toolbars */
.toolbars {
  height: 30px;
  padding-left: 5px;
}
.strip {
  display: flex;
  align-items: center;
  height: 12px;
  background: #fdfdfd;
}
.standard {
  width: 337px;
  justify-content: space-between;
  padding: 0 1px;
}
.standard .off {
  color: #c3c7cd;
}
.strip hr {
  width: 1px;
  height: 10px;
  margin: 0;
  border: none;
  background: #c4c0bc;
}
.row {
  display: flex;
  gap: 7px;
  margin-top: 2px;
}
.layer-strip {
  width: 207px;
  justify-content: space-around;
}
.prop-strip {
  gap: 5px;
}
.combo {
  display: flex;
  align-items: center;
  height: 11px;
  padding-left: 3px;
  gap: 2px;
  color: #8c8878;
  background: #fdf8e3;
  border: 1px solid #cfcab8;
}
.combo svg {
  width: 8px;
  height: 8px;
}
.layer {
  width: 158px;
}
.color {
  width: 78px;
}
.ltype {
  width: 84px;
}
.lweight {
  width: 64px;
}
.plot {
  width: 64px;
}
.swatch {
  width: 6px;
  height: 6px;
  background: #17dccb;
  border: 1px solid #3a8c84;
}
.thin {
  width: 32px;
  height: 1px;
  background: #8c8878;
}
.thick {
  width: 18px;
  height: 2px;
  background: #000;
}
.drop {
  width: 8px;
  height: 9px;
  background: #ece7d6;
  border-right: 1px solid #777;
  border-bottom: 1px solid #777;
  display: grid;
  place-items: center;
}
.drop::after {
  content: "";
  border: 2px solid transparent;
  border-top-color: #333;
  border-bottom: none;
}

/* workspace */
.workspace {
  flex: 1;
  display: flex;
  min-height: 0;
}
.dock {
  width: 17px;
  padding: 3px 0 0 1px;
  border-right: 1px solid #5e5a5a;
}
.dock.right {
  width: 18px;
  padding-left: 3px;
  border-right: none;
}
.tools {
  display: grid;
  grid-auto-rows: 1fr;
  width: 12px;
  background: #fcfcfd;
}
.draw {
  height: 234px;
}
.modify {
  width: 13px;
  height: 211px;
}
.mtext {
  font-size: 10px;
  color: #222;
}
.drawing {
  flex: 1;
  display: flex;
  flex-direction: column;
  min-width: 0;
}
.view {
  flex: 1;
  display: flex;
  min-height: 0;
}
.canvas {
  flex: 1;
  position: relative;
  min-width: 0;
  background: #000;
}
.view-label {
  position: absolute;
  left: 2px;
  top: 3px;
  color: #fff;
  font-weight: bold;
}
.plan {
  position: absolute;
  width: 100%;
  height: 100%;
}
.walls path {
  fill: none;
  stroke: #72b4ad;
  stroke-width: 1.4;
}
.crossing {
  fill: #0b5710;
  stroke: #c9ecc5;
  stroke-dasharray: 2 1;
}
.ucs {
  position: absolute;
  left: 7px;
  bottom: 2px;
  width: 40px;
  height: 44px;
}
.vscroll {
  width: 9px;
  display: flex;
  flex-direction: column;
  background: #fdfaec;
}
.vscroll button, .hscroll button {
  width: 8px;
  height: 8px;
  color: #111;
  background: #fdf9ea;
  border-right: 1px solid #555;
  border-bottom: 1px solid #555;
}
.vscroll .thumb {
  width: 8px;
  height: 8px;
  border-right: 1px solid #777;
  border-bottom: 1px solid #777;
}
.vscroll .end {
  margin-top: auto;
}
.tabs {
  display: flex;
  align-items: center;
  height: 11px;
  background: #fdf4e0;
}
.tab-nav {
  display: flex;
  width: 32px;
}
.tab-nav button {
  width: 8px;
  height: 8px;
  color: #555;
  border-right: 1px solid #bbb3a0;
  border-bottom: 1px solid #bbb3a0;
}
.tab {
  display: flex;
  align-items: center;
  justify-content: space-between;
  width: 29px;
  height: 10px;
  padding-left: 2px;
}
.tab::after {
  content: "";
  width: 1px;
  height: 8px;
  background: #333;
  transform: rotate(20deg);
}
.tab.active {
  justify-content: center;
  padding: 0;
  color: #fff;
  font-weight: bold;
  background: #000;
  clip-path: polygon(0 0, 100% 0, 90% 100%, 10% 100%);
}
.tab.active::after {
  display: none;
}
.hscroll {
  flex: 0 1 223px;
  margin-left: auto;
  padding-right: 9px;
  display: flex;
}
.track {
  flex: 1;
  background: #fdfaf2;
}

/* command line */
.command {
  display: flex;
  height: 32px;
  padding-top: 2px;
  border-bottom: 1px solid #666;
}
.grip {
  width: 12px;
  display: flex;
  flex-direction: column;
  align-items: center;
  justify-content: space-evenly;
  color: #fff;
  background: #777373;
}
.grip svg {
  width: 8px;
  height: 8px;
}
.console {
  flex: 1;
  font-family: "Liberation Mono", monospace;
  white-space: nowrap;
  min-width: 0;
}
.history {
  height: 18px;
  padding: 1px;
  background: #f0e6e7;
  border-bottom: 1px solid #aaa2a2;
}
.prompt {
  display: flex;
  align-items: center;
  gap: 4px;
  height: 11px;
  padding-left: 2px;
  background: #fff;
}
.prompt svg {
  width: 14px;
  height: 9px;
}
.prompt b {
  color: #2222cc;
}

/* status bar */
.status {
  display: flex;
  align-items: center;
  height: 13px;
  color: #333;
  background: linear-gradient(#a8a4a4, #8b8787);
}
.coords {
  width: 93px;
  padding-left: 6px;
  color: #555;
  white-space: nowrap;
}
.modes {
  display: flex;
}
.modes button, .status-right button {
  height: 11px;
  padding: 0 1px;
  background: #c8c4c4;
  box-shadow: inset -1px 0 #a09c9c;
}
.modes .on {
  color: #16536a;
  background: #a9e4f5;
}
.status-right {
  display: flex;
  align-items: center;
  margin-left: auto;
}
.status-right button {
  width: 12px;
}
.status-right .space {
  width: 23px;
}
.status-right .scale {
  width: 24px;
  margin-left: 7px;
}
.status-right .gap {
  margin-left: 4px;
}
.status-right .lit {
  background: #f3eed2;
}
.status-right > .caret {
  margin: 0 3px;
}

/* taskbar */
.taskbar {
  display: flex;
  align-items: center;
  height: 14px;
  padding-left: 1px;
  background: #fdf3e0;
}
.start {
  width: 28px;
  height: 12px;
  gap: 1px;
  font-weight: bold;
  border-right: 1px solid #777;
  border-bottom: 1px solid #777;
}
.launch {
  display: flex;
  gap: 9px;
  width: 97px;
  padding-left: 8px;
}
.tasks {
  display: flex;
  gap: 2px;
}
.tasks button {
  width: 83px;
  height: 12px;
  padding-left: 1px;
  gap: 2px;
  justify-content: flex-start;
  border-right: 1px solid #777;
  border-bottom: 1px solid #777;
}
.tasks .current {
  font-weight: bold;
  background: #fffdf8;
  border: none;
  border-top: 1px solid #777;
  border-left: 1px solid #777;
}
.tray {
  display: flex;
  align-items: center;
  gap: 4px;
  height: 12px;
  margin-left: auto;
  padding: 0 2px 0 3px;
  border-left: 1px solid #a9a394;
  border-top: 1px solid #d0c9b8;
}
.tray time {
  padding: 0 1px;
}
```
